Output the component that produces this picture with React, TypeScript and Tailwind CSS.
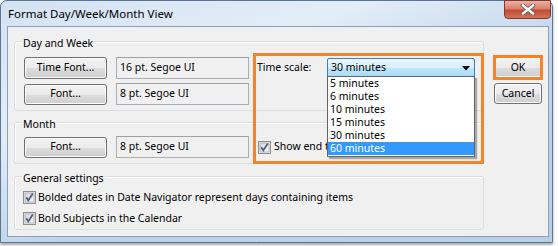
import type { ReactNode } from "react";

const btn =
  "flex items-center justify-center rounded-[3px] border border-[#707070] bg-[linear-gradient(to_bottom,#f2f2f2_0%,#ebebeb_50%,#dddddd_51%,#cfcfcf_100%)] shadow-[inset_0_0_0_1px_#fcfcfc]";

function Check() {
  return (
    <svg width="13" height="13" viewBox="0 0 13 13" className="shrink-0">
      <defs>
        <linearGradient id="cbg" x1="0" y1="0" x2="1" y2="1">
          <stop offset="0" stopColor="#d6d6d6" />
          <stop offset="1" stopColor="#fafafa" />
        </linearGradient>
      </defs>
      <rect x="0.5" y="0.5" width="12" height="12" fill="#f4f4f4" stroke="#8f8f8f" />
      <rect x="2" y="2" width="9" height="9" fill="url(#cbg)" stroke="#b2b2b2" strokeWidth="1" />
      <path d="M3.3 6.2 L5.3 9.4 L9.8 2.6" fill="none" stroke="#4a5d8a" strokeWidth="1.8" />
    </svg>
  );
}

function Group({ label, className, children }: { label: string; className?: string; children: ReactNode }) {
  return (
    <div className={`relative rounded-[3px] border border-[#d5dfe5] shadow-[inset_1px_1px_0_#fff] ${className ?? ""}`}>
      <span className="absolute left-[7px] -top-[7px] bg-[#f0f0f0] px-[1px] leading-[16px]">{label}</span>
      {children}
    </div>
  );
}

function TextBox({ value }: { value: string }) {
  return (
    <div className="ml-[9px] flex h-[22px] w-[133px] items-center border border-[#abadb3] border-t-[#a0a0a0] bg-[#f0f0f0] pl-[3px]">
      {value}
    </div>
  );
}

const minutes = ["5 minutes", "6 minutes", "10 minutes", "15 minutes", "30 minutes", "60 minutes"];

export default function App() {
  return (
    <div className="h-[246px] w-[558px] overflow-hidden bg-white font-['Noto_Sans',sans-serif] text-[10.5px] text-black">
      <div className="relative flex h-[243px] w-[553px] flex-col rounded-t-[7px] border border-[#5c7594] bg-[linear-gradient(160deg,#d3e2f2_0%,#e3edf8_30%,#bcd3ea_60%,#b8cfe8_100%)] shadow-[0_2px_3px_rgba(0,0,0,0.35)]">
        {/* title bar */}
        <div className="flex h-[25px] items-center pl-[7px] text-[11.5px]">Format Day/Week/Month View</div>
        <div className="absolute right-[1px] -top-[1px] flex h-[19px] w-[47px] items-center justify-center rounded-b-[4px] border border-[#7c3a2e] bg-[linear-gradient(to_bottom,#eab3a5_0%,#d9806b_45%,#c54a32_55%,#d2755b_100%)]">
          <svg width="16" height="11" viewBox="0 0 16 11">
            <path d="M3 1.5 L13 9.5 M13 1.5 L3 9.5" stroke="#5a5a5a" strokeWidth="4" strokeLinecap="square" />
            <path d="M3 1.5 L13 9.5 M13 1.5 L3 9.5" stroke="#ffffff" strokeWidth="2.4" strokeLinecap="square" />
          </svg>
        </div>

        {/* client area */}
        <div className="relative ml-[6px] mr-[3px] flex h-[211px] border border-[#8aa0ba] bg-[#f0f0f0] pl-[6px]">
          <div className="flex w-[470px] flex-col pt-[14px]">
            <Group label="Day and Week" className="pb-[5px] pl-[9px] pt-[15px]">
              <div className="flex items-center">
                <div className={`${btn} h-[22px] w-[83px]`}>Time Font...</div>
                <TextBox value="16 pt. Segoe UI" />
                <span className="ml-[8px] w-[70px]">Time scale:</span>
                <div className="flex h-[20px] w-[148px] items-center justify-between rounded-[2px] border border-[#3c7fb1] bg-[linear-gradient(to_bottom,#eaf6fd_0%,#d9f0fc_50%,#bee6fd_51%,#a7d9f5_100%)] pl-[3px] pr-[4px]">
                  <span>30 minutes</span>
                  <svg width="8" height="5" viewBox="0 0 8 5">
                    <path d="M0 0 H8 L4 4.5 Z" fill="#000" />
                  </svg>
                </div>
              </div>
              <div className="mt-[4px] flex items-center">
                <div className={`${btn} h-[21px] w-[83px]`}>Font...</div>
                <TextBox value="8 pt. Segoe UI" />
              </div>
            </Group>

            <Group label="Month" className="mt-[11px] pb-[5px] pl-[9px] pt-[13px]">
              <div className="flex items-center">
                <div className={`${btn} h-[21px] w-[83px]`}>Font...</div>
                <TextBox value="8 pt. Segoe UI" />
                <div className="ml-[9px] flex items-center gap-[3px]">
                  <Check />
                  <span>Show end time</span>
                </div>
              </div>
            </Group>

            <Group label="General settings" className="mt-[12px] pb-0 pl-[8px] pt-[10px]">
              <div className="flex h-[21px] items-center gap-[2px]">
                <Check />
                <span>Bolded dates in Date Navigator represent days containing items</span>
              </div>
              <div className="flex h-[21px] items-center gap-[2px]">
                <Check />
                <span>Bold Subjects in the Calendar</span>
              </div>
            </Group>
          </div>

          {/* buttons */}
          <div className="ml-[10px] flex flex-col gap-[5px] pt-[30px]">
            <div className={`${btn} h-[21px] w-[48px]`}>OK</div>
            <div className={`${btn} h-[21px] w-[48px]`}>Cancel</div>
          </div>

          {/* open dropdown list */}
          <div className="absolute left-[319px] top-[49px] w-[148px] border border-[#646464] bg-white pb-[1px] shadow-[2px_2px_1px_rgba(0,0,0,0.3)]">
            {minutes.map((m) => (
              <div
                key={m}
                className={`flex h-[13px] items-center pl-[2px] leading-[13px] ${m === "60 minutes" ? "bg-[#3399ff] text-white" : ""}`}
              >
                {m}
              </div>
            ))}
          </div>

          {/* orange highlights */}
          <div className="pointer-events-none absolute left-[245px] top-[26px] h-[111px] w-[231px] border-[3px] border-[#f7822a]" />
          <div className="pointer-events-none absolute left-[485px] top-[28px] h-[25px] w-[50px] border-[3px] border-[#f7822a]" />
        </div>
      </div>
    </div>
  );
}
